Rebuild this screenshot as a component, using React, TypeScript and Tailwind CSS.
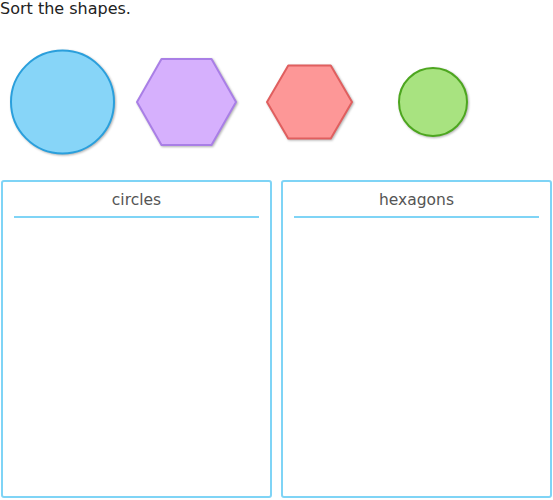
const shadow = "drop-shadow-[1px_1px_1px_rgba(0,0,0,0.3)]";

function Bin({ label }: { label: string }) {
  return (
    <div className="flex h-[318px] w-[271px] flex-col rounded-[3px] border-2 border-[#7fd4f6]">
      <div className="pt-[9px] text-center text-[15.5px] leading-[18px] text-[#555]">{label}</div>
      <div className="mx-[11px] mt-[7px] h-[2px] bg-[#7fd4f6]" />
    </div>
  );
}

export default function App() {
  return (
    <div className="h-[500px] w-[553px] bg-white font-['DejaVu_Sans',Verdana,sans-serif]">
      <p className="text-[16px] leading-[18px] text-[#222]">Sort the shapes.</p>

      <div className="mt-[24px] flex h-[120px] items-center">
        <svg className={`ml-[9px] ${shadow}`} width="108" height="110" viewBox="0 0 108 110">
          <circle cx="53.5" cy="55" r="51.5" fill="#87d5f8" stroke="#2a9fdc" strokeWidth="2" />
        </svg>
        <svg className={`ml-[18px] ${shadow}`} width="104" height="110" viewBox="0 0 104 110">
          <polygon
            points="2,55 26.5,12 76.5,12 101,55 76.5,98 26.5,98"
            fill="#d6b0fd"
            stroke="#a97fe6"
            strokeWidth="2"
            strokeLinejoin="round"
          />
        </svg>
        <svg className={`ml-[26px] ${shadow}`} width="90" height="110" viewBox="0 0 90 110">
          <polygon
            points="2,55 23.25,18.5 65.75,18.5 87,55 65.75,91.5 23.25,91.5"
            fill="#fd9797"
            stroke="#e05f5f"
            strokeWidth="2"
            strokeLinejoin="round"
          />
        </svg>
        <svg className={`ml-[41px] ${shadow}`} width="76" height="110" viewBox="0 0 76 110">
          <circle cx="37" cy="55" r="34" fill="#a8e380" stroke="#4da61f" strokeWidth="2" />
        </svg>
      </div>

      <div className="mt-[18px] flex gap-[9px] pl-[1px]">
        <Bin label="circles" />
        <Bin label="hexagons" />
      </div>
    </div>
  );
}
